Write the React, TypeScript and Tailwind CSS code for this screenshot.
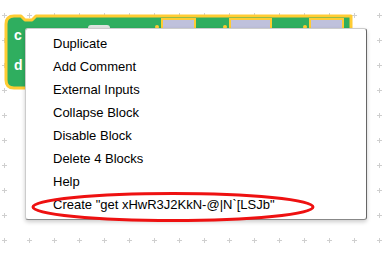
import React from 'react';

const items = [
    'Duplicate',
    'Add Comment',
    'External Inputs',
    'Collapse Block',
    'Disable Block',
    'Delete 4 Blocks',
    'Help',
    'Create "get xHwR3J2KkN-@|N`[LSJb"',
];

const GridDots: React.FC = () => (
    <svg className="absolute inset-0" width={389} height={253}>
        <defs>
            <pattern id="grid" x={4} y={15} width={25} height={25} patternUnits="userSpaceOnUse">
                <path d="M-2 0.5H3M0.5 -2V3" stroke="#cfcfcf" strokeWidth={1} fill="none" />
                <path d="M23 0.5H27M0.5 23V27M23 25.5H27M25.5 23V27M-2 25.5H3M25.5 -2V3" stroke="#cfcfcf" strokeWidth={1} fill="none" />
            </pattern>
        </defs>
        <rect x={0} y={0} width={389} height={253} fill="url(#grid)" />
    </svg>
);

const Block: React.FC = () => (
    <svg className="absolute inset-0" width={389} height={253}>
        <path
            d="M6 24 Q6 16 14 16 H21 L25 20 H32 L36 16 H351 V88 H14 Q6 88 6 80 Z"
            fill="#2fae5f"
            stroke="#ffcc33"
            strokeWidth={3}
            strokeLinejoin="round"
        />
        <rect x={88} y={25} width={22} height={8} rx={3} fill="#dfe3e0" />
        {[
            [162, 33],
            [230, 41],
            [310, 33],
        ].map(([x, w]) => (
            <g key={x}>
                <circle cx={x - 5} cy={27} r={2} fill="#ffcc33" />
                <rect x={x} y={19} width={w} height={20} fill="#bfc1dc" stroke="#ffcc33" strokeWidth={2} />
            </g>
        ))}
    </svg>
);

export default function App() {
    return (
        <div className="relative w-[389px] h-[253px] bg-white overflow-hidden" style={{ fontFamily: '"Liberation Sans", Arial, sans-serif' }}>
            <GridDots />
            <Block />
            <span className="absolute left-[14px] top-[27px] text-[14px] font-bold text-white leading-[16px]">c</span>
            <span className="absolute left-[14px] top-[57px] text-[14px] font-bold text-white leading-[16px]">d</span>

            <div className="absolute left-[25px] top-[28px] w-[342px] bg-white border border-[#cccccc] border-r-[#666666] border-b-[#888888] rounded-[3px] shadow-[0_2px_4px_rgba(0,0,0,0.2)] py-[3px]">
                {items.map((label) => (
                    <div key={label} className="h-[23px] flex items-center pl-[27px] text-[13px] text-black whitespace-pre">
                        {label}
                    </div>
                ))}
            </div>

            <svg className="absolute inset-0 pointer-events-none" width={389} height={253}>
                <ellipse cx={173} cy={207} rx={140} ry={13.5} fill="none" stroke="#ee1111" strokeWidth={3} />
            </svg>
        </div>
    );
}
